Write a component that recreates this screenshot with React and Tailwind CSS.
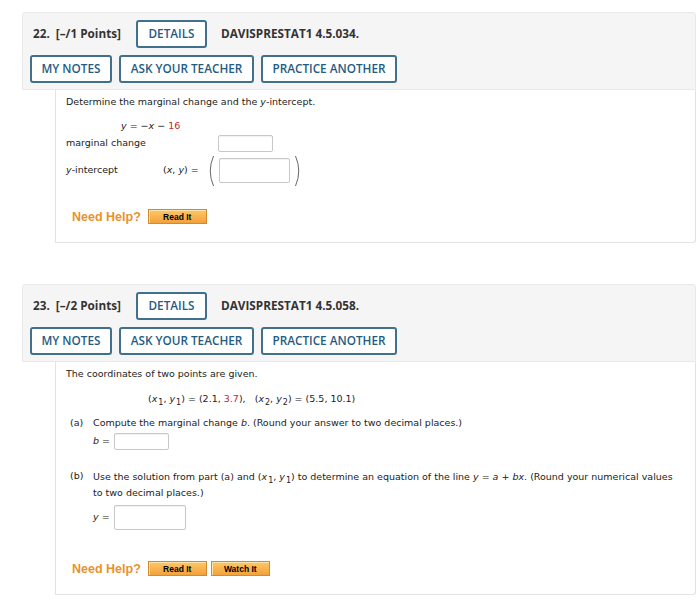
// App.jsx
const head = { fontFamily: '"Open Sans", "Liberation Sans", sans-serif' };
const body = { fontFamily: '"DejaVu Sans", Verdana, sans-serif' };
const arial = { fontFamily: '"Liberation Sans", Arial, sans-serif' };

const OutlineButton = ({ children, className = '' }) => (
  <div
    className={`h-[28px] flex items-center justify-center border-2 border-[#41708c] rounded-[3px] bg-white text-[11.75px] font-semibold text-[#1f5c82] ${className}`}
  >
    {children}
  </div>
);

const Header = ({ num, points, code }) => (
  <div
    className="bg-[#f5f5f5] border border-[#e9e9e9] rounded-t-[3px] h-[78px] pl-[7px] pt-[7px]"
    style={head}
  >
    <div className="flex items-center h-[28px] text-[11.75px] font-bold text-[#333]">
      <span className="ml-[3px]">{num}</span>
      <span className="ml-[6px]">[–/{points} Points]</span>
      <OutlineButton className="ml-[15px] w-[71px]">DETAILS</OutlineButton>
      <span className="ml-[14px]">{code}</span>
    </div>
    <div className="flex gap-[7px] mt-[7px]">
      <OutlineButton className="w-[82px]">MY NOTES</OutlineButton>
      <OutlineButton className="w-[135px]">ASK YOUR TEACHER</OutlineButton>
      <OutlineButton className="w-[136px]">PRACTICE ANOTHER</OutlineButton>
    </div>
  </div>
);

const Input = ({ w, h }) => (
  <div className={`${w} ${h} border border-[#c8c8c8] rounded-[2px] bg-white shadow-[inset_0_1px_1px_rgba(0,0,0,0.06)]`} />
);

const HelpButton = ({ children }) => (
  <div
    className="w-[59px] h-[15px] flex items-center justify-center border border-[#d48a2c] bg-gradient-to-b from-[#fdc866] to-[#f2a13a] text-[8.5px] font-bold text-black shadow-[inset_1px_1px_0_#fde2a8]"
    style={arial}
  >
    {children}
  </div>
);

const NeedHelp = ({ buttons }) => (
  <div className="flex items-center ml-[6px]">
    <span className="text-[12.5px] font-bold text-[#e8912f] mr-[7px]" style={arial}>
      Need Help?
    </span>
    <div className="flex gap-[4px]">
      {buttons.map((b) => (
        <HelpButton key={b}>{b}</HelpButton>
      ))}
    </div>
  </div>
);

const Paren = ({ flip }) => (
  <svg width="9" height="32" viewBox="0 0 9 32" className={flip ? 'scale-x-[-1]' : ''}>
    <path d="M7.5 1 Q1 16 7.5 31" fill="none" stroke="#666" strokeWidth="1" />
  </svg>
);

const Sub = ({ v, n }) => (
  <span className="whitespace-nowrap">
    <i>{v}</i>
    <span className="inline-block text-[8px] leading-none align-[-3px] ml-[1px]">{n}</span>
  </span>
);

export default function App() {
  return (
    <div className="w-[700px] h-[605px] bg-white pt-[12px] pl-[22px] text-[#222]">
      {/* Question 22 */}
      <div className="w-[674px]">
        <Header num="22." points="1" code="DAVISPRESTAT1 4.5.034." />
        <div
          className="ml-[33px] h-[153px] border-l border-r border-b border-[#e3e3e3] rounded-br-[3px] pl-[10px] pt-[5px] text-[9.5px]"
          style={body}
        >
          <div>
            Determine the marginal change and the <i>y</i>-intercept.
          </div>
          <div className="ml-[55px] mt-[10px]">
            <i>y</i> = −<i>x</i> − <span className="text-[#c0282d]">16</span>
          </div>
          <div className="flex items-center mt-[1px] h-[17px]">
            <span className="w-[152px]">marginal change</span>
            <Input w="w-[55px]" h="h-[17px]" />
          </div>
          <div className="flex items-center mt-[3px] h-[32px]">
            <span className="w-[97px]">
              <i>y</i>-intercept
            </span>
            <span className="w-[43px]">
              (<i>x</i>, <i>y</i>) =
            </span>
            <Paren />
            <span className="w-[4px]" />
            <Input w="w-[71px]" h="h-[25px]" />
            <span className="w-[4px]" />
            <Paren flip />
          </div>
          <div className="mt-[21px]">
            <NeedHelp buttons={['Read It']} />
          </div>
        </div>
      </div>

      {/* Question 23 */}
      <div className="w-[674px] mt-[41px]">
        <Header num="23." points="2" code="DAVISPRESTAT1 4.5.058." />
        <div
          className="ml-[33px] h-[233px] border-l border-r border-b border-[#e3e3e3] rounded-br-[3px] pl-[10px] pt-[5px] text-[9.5px]"
          style={body}
        >
          <div>The coordinates of two points are given.</div>
          <div className="ml-[82px] mt-[11px] whitespace-pre">
            (<Sub v="x" n="1" />, <Sub v="y" n="1" />) = (2.1, <span className="text-[#c0282d]">3.7</span>),{'   '}(
            <Sub v="x" n="2" />, <Sub v="y" n="2" />) = (5.5, 10.1)
          </div>
          <div className="flex mt-[9px] ml-[4px]">
            <span className="w-[23px]">(a)</span>
            <div>
              <div>
                Compute the marginal change <i>b</i>. (Round your answer to two decimal places.)
              </div>
              <div className="flex items-center mt-[2px] gap-[4px]">
                <span>
                  <i>b</i> =
                </span>
                <Input w="w-[55px]" h="h-[17px]" />
              </div>
            </div>
          </div>
          <div className="flex mt-[19px] ml-[4px]">
            <span className="w-[23px] shrink-0">(b)</span>
            <div>
              <div className="leading-[16px] pr-[16px]">
                Use the solution from part (a) and (<Sub v="x" n="1" />, <Sub v="y" n="1" />) to determine an
                equation of the line <i>y</i> = <i>a</i> + <i>bx</i>. (Round your numerical values to two decimal
                places.)
              </div>
              <div className="flex items-center mt-[4px] gap-[4px]">
                <span>
                  <i>y</i> =
                </span>
                <Input w="w-[72px]" h="h-[25px]" />
              </div>
            </div>
          </div>
          <div className="mt-[30px]">
            <NeedHelp buttons={['Read It', 'Watch It']} />
          </div>
        </div>
      </div>
    </div>
  );
}
